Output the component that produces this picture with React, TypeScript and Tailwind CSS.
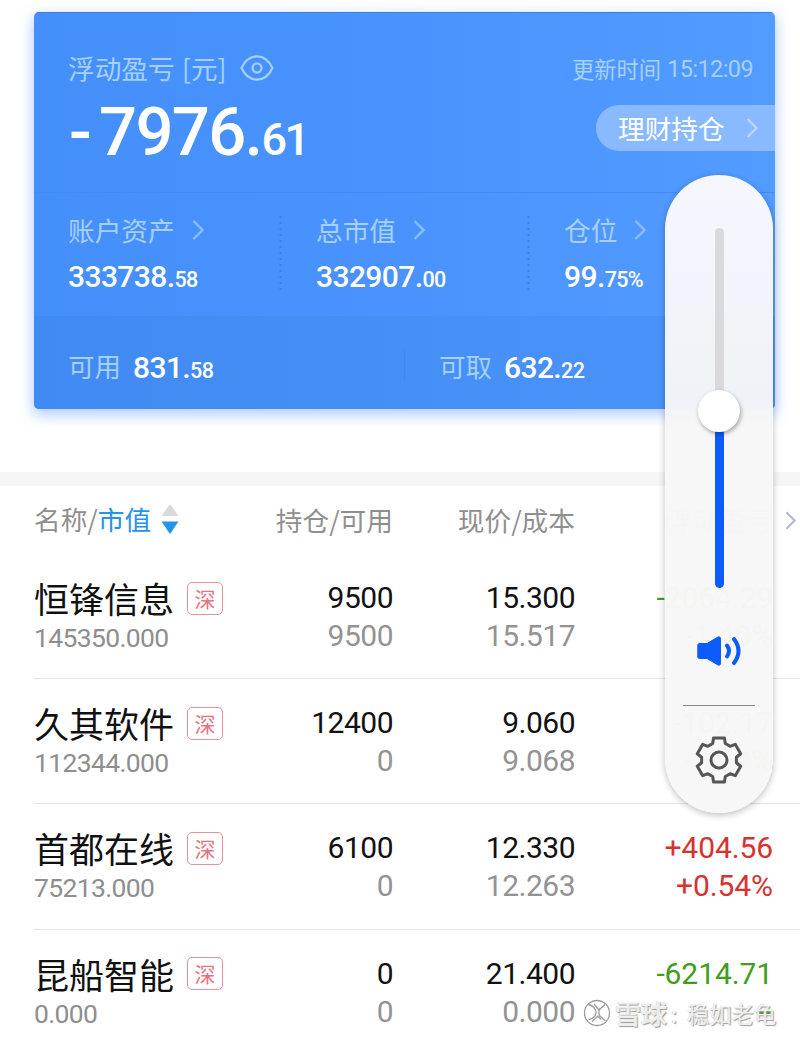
import React from "react";

const cn = "font-['Noto_Sans_CJK_SC',sans-serif]";

function Chevron({ className }: { className: string }) {
  return (
    <svg viewBox="0 0 12 20" fill="none" stroke="currentColor" strokeWidth="2.4" className={className}>
      <path d="M1.5 1 L10.5 10 L1.5 19" />
    </svg>
  );
}

function Amount({ whole, cents }: { whole: string; cents: string }) {
  return (
    <span className="whitespace-nowrap text-[30px] leading-[40px] font-medium tracking-[-0.6px] text-white">
      {whole}.<span className="text-[21.5px] tracking-[-0.7px]">{cents}</span>
    </span>
  );
}

function Stat({ label, whole, cents }: { label: string; whole: string; cents: string }) {
  return (
    <div className="flex flex-col">
      <div className="flex h-10 items-center gap-[17px]">
        <span className={`${cn} text-[26.7px] leading-10 text-[#a5d0ff]`}>{label}</span>
        <Chevron className="h-5 w-3 text-[#8abfff]" />
      </div>
      <div className="mt-[7px] flex h-10">
        <Amount whole={whole} cents={cents} />
      </div>
    </div>
  );
}

function Dots() {
  return (
    <svg className="h-[76px] w-[3px]" viewBox="0 0 3 76">
      <path d="M1.5 0 V76" stroke="#3a82e8" strokeWidth="2" strokeDasharray="2 4" />
    </svg>
  );
}

function Summary() {
  return (
    <section className="ml-[34px] mt-3 flex h-[397px] w-[741px] shrink-0 flex-col overflow-hidden rounded-[5px] bg-gradient-to-r from-[#448ffa] via-[#4a93fe] to-[#529bff] shadow-[0_5px_14px_1px_rgba(75,130,255,0.42)]">
      <div className="flex h-[181px] shrink-0 flex-col border-t border-b border-t-[#3b7fdd] border-b-[#438bf2]">
        <div className="mt-[35px] flex h-10 items-center justify-between pl-[34px] pr-[22px]">
          <div className="flex items-center">
            <span className={`${cn} w-[107px] text-[26.7px] leading-[38px] whitespace-nowrap text-[#a5d0ff]`}>浮动盈亏</span>
            <span className={`${cn} ml-[7px] w-[42px] text-[26.5px] leading-[38px] whitespace-nowrap text-[#a5d0ff]`}>
              [元]
            </span>
            <svg viewBox="0 0 34 26" fill="none" stroke="#a5d0ff" strokeWidth="2.2" className="ml-[16px] h-[26px] w-[34px]">
              <path d="M1.5 13 C9 -2.5 25 -2.5 32.500 13 C25 28.500 9 28.500 1.500 13 Z" />
              <circle cx="17" cy="13" r="4.500" />
            </svg>
          </div>
          <div className="flex items-center text-[#a5d0ff]">
            <span className={`${cn} text-[22.300px] leading-[38px]`}>更新时间</span>
            <span className="mt-[2px] ml-[6px] text-[23.5px] leading-10 tracking-[-0.6px]">15:12:09</span>
          </div>
        </div>
        <div className="flex justify-between pl-[34px]">
          <div className="mt-[4px] h-[80px] text-[67px] leading-[80px] font-medium tracking-[-1.7px] whitespace-nowrap text-white">
            <span className="inline-block w-[31px] pl-px">-</span>7976.<span className="text-[45px] tracking-[-2.500px]">61</span>
          </div>
          <div className="mt-[17px] flex h-[46px] w-[179px] items-center rounded-l-full bg-[#89b9ff] pl-[22px]">
            <span className={`${cn} text-[26.7px] leading-[40px] text-white`}>理财持仓</span>
            <Chevron className="ml-[21px] h-5 w-3 text-[#b9d6ff]" />
          </div>
        </div>
      </div>
      <div className="flex h-[123px] shrink-0 items-start pt-[17px]">
        <div className="flex w-[248px] justify-between pl-[34px]">
          <Stat label="账户资产" whole="333738" cents="58" />
          <div className="pt-[6px]"><Dots /></div>
        </div>
        <div className="flex w-[248px] justify-between pl-[34px]">
          <Stat label="总市值" whole="332907" cents="00" />
          <div className="pt-[6px]"><Dots /></div>
        </div>
        <div className="pl-[34px]">
          <Stat label="仓位" whole="99" cents="75%" />
        </div>
      </div>
      <div className="flex h-[93px] shrink-0 items-center bg-gradient-to-r from-[#428af3] to-[#4994fb]">
        <div className="flex w-[370px] items-center pt-[13px] pl-[34px]">
          <span className={`${cn} w-[65px] pb-[6px] text-[26.5px] leading-[34px] text-[#a5d0ff]`}>可用</span>
          <Amount whole="831" cents="58" />
        </div>
        <div className="mt-[6px] h-8 w-px bg-[#4287ef]" />
        <div className="flex items-center pt-[13px] pl-[34px]">
          <span className={`${cn} w-[65px] pb-[6px] text-[26.5px] leading-[34px] text-[#a5d0ff]`}>可取</span>
          <Amount whole="632" cents="22" />
        </div>
      </div>
    </section>
  );
}

type Holding = {
  name: string;
  value: string;
  qty: string;
  avail: string;
  price: string;
  cost: string;
  pnl: string;
  pct: string;
  tone: string;
};

const holdings: Holding[] = [
  { name: "恒锋信息", value: "145350.000", qty: "9500", avail: "9500", price: "15.300", cost: "15.517", pnl: "-2064.29", pct: "-1.40%", tone: "text-[#3f9d22]" },
  { name: "久其软件", value: "112344.000", qty: "12400", avail: "0", price: "9.060", cost: "9.068", pnl: "-102.17", pct: "-0.09%", tone: "text-[#3f9d22]" },
  { name: "首都在线", value: "75213.000", qty: "6100", avail: "0", price: "12.330", cost: "12.263", pnl: "+404.56", pct: "+0.54%", tone: "text-[#d8322f]" },
  { name: "昆船智能", value: "0.000", qty: "0", avail: "0", price: "21.400", cost: "0.000", pnl: "-6214.71", pct: "--", tone: "text-[#3f9d22]" },
];

function Pair({ top, bottom, width, first, second }: { top: string; bottom: string; width: string; first: string; second: string }) {
  return (
    <div className={`flex flex-col pt-[25px] text-right text-[30px] leading-[38px] whitespace-nowrap ${width}`}>
      <span className={first}>{top}</span>
      <span className={second}>{bottom}</span>
    </div>
  );
}

function Row({ h }: { h: Holding }) {
  return (
    <div className="ml-[34px] flex h-[125.2px] shrink-0 border-b border-[#e4e4e4]">
      <div className="w-[218px] pt-[24px]">
        <div className="flex h-10 items-center">
          <span className={`${cn} text-[35px] leading-10 text-[#111]`}>{h.name}</span>
          <span className={`${cn} ml-[13px] flex h-[33px] w-9 items-center justify-center rounded-[5px] border-[1.5px] border-[#e8919a] text-[21px] leading-none text-[#e8737e]`}>
            深
          </span>
        </div>
        <div className="mt-px text-[26.5px] leading-[38px] tracking-[-0.65px] text-[#8e8e8e]">{h.value}</div>
      </div>
      <Pair top={h.qty} bottom={h.avail} width="w-[141px] tracking-[-0.5px]" first="text-[#111]" second="text-[#939393]" />
      <Pair top={h.price} bottom={h.cost} width="w-[182px] tracking-[-0.5px]" first="text-[#111]" second="text-[#939393]" />
      <Pair top={h.pnl} bottom={h.pct} width="w-[198px] tracking-[-0.1px]" first={h.tone} second={h.tone} />
    </div>
  );
}

function TableHead() {
  return (
    <div className={`${cn} flex h-[68px] shrink-0 items-start pt-[13px] pl-[34px] text-[26.7px] leading-[40px] whitespace-nowrap text-[#8f8f8f]`}>
      <div className="flex w-[218px] items-center">
        <span>名称/</span>
        <span className="text-[#2494e8]">市值</span>
        <svg viewBox="0 0 18 30" className="ml-[10px] h-[30px] w-[18px]">
          <path d="M9 0 L17.500 12 H0.500 Z" fill="#d9d9d9" />
          <path d="M9 30 L17.500 17.500 H0.500 Z" fill="#2494e8" />
        </svg>
      </div>
      <div className="w-[141px] pt-px text-right">持仓/可用</div>
      <div className="w-[182px] pt-px text-right">现价/成本</div>
      <div className="w-[198px] pt-px text-right">浮动盈亏</div>
      <Chevron className="mt-[12px] ml-[12px] h-[19px] w-[11px] text-[#b3bdc9]" />
    </div>
  );
}

function gearPath() {
  const pts: string[] = [];
  const at = (deg: number, r: number) => {
    const a = (deg * Math.PI) / 180;
    return `${(25 + r * Math.cos(a)).toFixed(2)} ${(25 + r * Math.sin(a)).toFixed(2)}`;
  };
  for (let i = 0; i < 6; i++) {
    const c = i * 60 - 90;
    pts.push(`${at(c - 21, 17.6)} L${at(c - 14, 22.6)}`, `${at(c + 14, 22.6)} L${at(c + 21, 17.6)}`);
  }
  return `M${pts.join(" L")} Z`;
}

function VolumePanel() {
  return (
    <aside className="absolute top-[175px] left-[665px] flex h-[638px] w-[108px] flex-col items-center rounded-full bg-gradient-to-b from-[#f8f7fffc] via-[#f2f4f7fb] via-35% to-[#f7f7f7fb] to-40% pt-[53px] shadow-[0_2px_7px_rgba(0,0,0,0.25)]">
      <div className="h-[170px] w-[9px] rounded-t-full bg-[#d9d9de]" />
      <div className="relative z-10 -mt-[8px] -mb-[8px] h-[42px] w-[42px] shrink-0 rounded-full bg-white shadow-[1px_2px_4px_rgba(0,0,0,0.35)]" />
      <div className="h-[164px] w-[9px] rounded-b-full bg-[#0b5cfb]" />
      <svg viewBox="0 0 44 32" className="mt-[47px] h-8 w-11" fill="none" stroke="#0b5cfb" strokeLinecap="round">
        <path d="M2.500 8.500 H10 L21 2 Q23.500 1 23.500 4 V28 Q23.500 31 21 30 L10 23.500 H2.500 Q0.800 23.500 0.800 22 V10 Q0.800 8.500 2.500 8.500 Z" fill="#0b5cfb" strokeWidth="1" />
        <path d="M30 10.500 Q34 16 30 21.500" strokeWidth="4" />
        <path d="M37 4 Q46 16 37 28" strokeWidth="4" />
      </svg>
      <div className="mt-[38px] h-px w-[72px] shrink-0 bg-[#858585]" />
      <svg viewBox="0 0 50 50" className="mt-[29px] h-[50px] w-[50px] shrink-0" fill="none" stroke="#555" strokeWidth="3" strokeLinejoin="round">
        <path d={gearPath()} />
        <circle cx="25" cy="25" r="8" />
      </svg>
    </aside>
  );
}

function Watermark() {
  return (
    <div className={`${cn} absolute top-[995px] left-[583px] flex h-9 items-center whitespace-nowrap text-white/80 [text-shadow:1px_1px_1px_#999,-0.5px_-0.5px_1px_#ccc]`}>
      <svg viewBox="0 0 28 28" className="h-7 w-7" fill="none" stroke="#9b9b9b" strokeWidth="1.300">
        <circle cx="14" cy="14" r="12.500" />
        <path d="M5 5.500 Q10 6 12.500 11 Q14 14 11.500 17.500 Q9 20 5.500 21 M11 5 L16 11 L22 5.500 M17 9.500 Q14.500 13 17 17 L22.500 22 M9 22.500 L15 17 L18 20.500" />
      </svg>
      <span className="ml-[4px] text-[26px] leading-9 font-bold">雪球</span>
      <span className="w-[20px] pl-[4px] text-[22px] leading-9">:</span>
      <span className="text-[22.300px] leading-9">稳如老龟</span>
    </div>
  );
}

export default function App() {
  return (
    <main className="relative flex h-[1039px] w-[800px] flex-col overflow-hidden bg-white font-['Roboto','Noto_Sans_CJK_SC',sans-serif]">
      <Summary />
      <div className="mt-[63px] h-[14px] shrink-0 bg-[#f6f6f6]" />
      <TableHead />
      {holdings.map((h) => (
        <Row key={h.name} h={h} />
      ))}
      <VolumePanel />
      <Watermark />
    </main>
  );
}
